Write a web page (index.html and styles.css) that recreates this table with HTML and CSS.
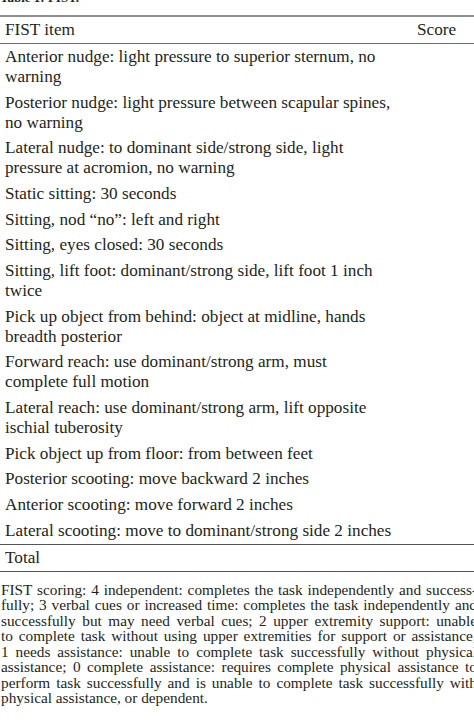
FILE: index.html
```html
<!DOCTYPE html>
<html lang="en">
<head>
<meta charset="utf-8">
<title>FIST</title>
<link rel="stylesheet" href="styles.css">
</head>
<body>
<div class="page">
  <div class="caption">Table 1: FIST.</div>
  <table class="fist">
    <thead>
      <tr><th class="item">FIST item</th><th class="score">Score</th></tr>
    </thead>
    <tbody>
      <tr><td class="item">Anterior nudge: light pressure to superior sternum, no<br>warning</td><td class="score"></td></tr>
      <tr><td class="item">Posterior nudge: light pressure between scapular spines,<br>no warning</td><td class="score"></td></tr>
      <tr><td class="item">Lateral nudge: to dominant side/strong side, light<br>pressure at acromion, no warning</td><td class="score"></td></tr>
      <tr><td class="item">Static sitting: 30 seconds</td><td class="score"></td></tr>
      <tr><td class="item">Sitting, nod “no”: left and right</td><td class="score"></td></tr>
      <tr><td class="item">Sitting, eyes closed: 30 seconds</td><td class="score"></td></tr>
      <tr><td class="item">Sitting, lift foot: dominant/strong side, lift foot 1 inch<br>twice</td><td class="score"></td></tr>
      <tr><td class="item">Pick up object from behind: object at midline, hands<br>breadth posterior</td><td class="score"></td></tr>
      <tr><td class="item">Forward reach: use dominant/strong arm, must<br>complete full motion</td><td class="score"></td></tr>
      <tr><td class="item">Lateral reach: use dominant/strong arm, lift opposite<br>ischial tuberosity</td><td class="score"></td></tr>
      <tr><td class="item">Pick object up from floor: from between feet</td><td class="score"></td></tr>
      <tr><td class="item">Posterior scooting: move backward 2 inches</td><td class="score"></td></tr>
      <tr><td class="item">Anterior scooting: move forward 2 inches</td><td class="score"></td></tr>
      <tr><td class="item">Lateral scooting: move to dominant/strong side 2 inches</td><td class="score"></td></tr>
    </tbody>
    <tfoot>
      <tr><td class="item">Total</td><td class="score"></td></tr>
    </tfoot>
  </table>
  <p class="note">
    <span class="ln">FIST scoring: 4 independent: completes the task independently and success-</span>
    <span class="ln">fully; 3 verbal cues or increased time: completes the task independently and</span>
    <span class="ln">successfully but may need verbal cues; 2 upper extremity support: unable</span>
    <span class="ln">to complete task without using upper extremities for support or assistance;</span>
    <span class="ln">1 needs assistance: unable to complete task successfully without physical</span>
    <span class="ln">assistance; 0 complete assistance: requires complete physical assistance to</span>
    <span class="ln">perform task successfully and is unable to complete task successfully with</span>
    <span class="ln last">physical assistance, or dependent.</span>
  </p>
</div>
</body>
</html>
```

FILE: styles.css
```css
html, body {
  margin: 0;
  padding: 0;
  background: #ffffff;
  overflow: hidden;
}

.page {
  width: 474px;
  height: 725px;
  overflow: hidden;
  font-family: "Liberation Serif", "Times New Roman", serif;
  color: #231f20;
}

.caption {
  font-weight: bold;
  font-size: 13px;
  line-height: 14px;
  margin-top: -9px;
  margin-bottom: 10px;
  white-space: nowrap;
}

.fist {
  width: 474px;
  border-collapse: collapse;
  font-size: 17.2px;
  line-height: 20px;
}

.fist thead tr {
  border-top: 2px solid #8e8e8e;
  border-bottom: 1px solid #6e6e6e;
}

.fist th {
  font-weight: normal;
  text-align: left;
  padding: 3px 0 3px 5px;
}

.fist td {
  padding: 2.85px 0 2.85px 5px;
  vertical-align: top;
}

.fist .item {
  white-space: nowrap;
}

.fist .score {
  width: 57px;
  padding-left: 0;
}

.fist tfoot tr {
  border-top: 1px solid #555555;
  border-bottom: 1px solid #555555;
}

.fist tfoot td {
  padding: 3px 0 3px 5px;
}

.fist tfoot td.score {
  padding-left: 0;
}

.note {
  margin: 10px 0 0 1px;
  width: 476px;
  font-size: 15.3px;
  line-height: 15.5px;
}

.ln {
  display: block;
  white-space: nowrap;
  text-align: justify;
  text-align-last: justify;
}

.ln.last {
  text-align-last: left;
}
```
